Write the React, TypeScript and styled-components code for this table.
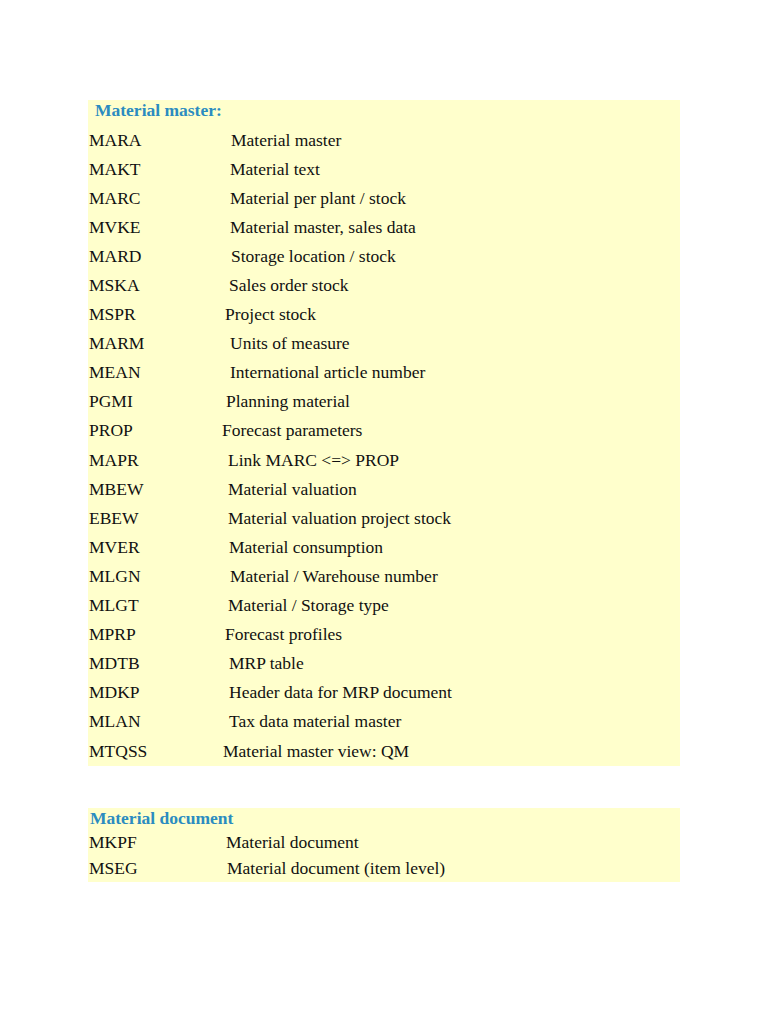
import React from "react";
import styled, { createGlobalStyle } from "styled-components";

const GlobalStyle = createGlobalStyle`
  html, body {
    margin: 0;
    padding: 0;
    background: #ffffff;
  }
  body {
    font-family: "Liberation Serif", "Times New Roman", serif;
    color: #111111;
  }
`;

const Page = styled.div({
  width: "768px",
  minHeight: "1024px",
  paddingTop: "100px",
  paddingLeft: "88px",
  boxSizing: "border-box",
  display: "flex",
  flexDirection: "column",
  gap: "42px",
});

const Section = styled.section({
  width: "592px",
  backgroundColor: "#ffffcc",
  display: "flex",
  flexDirection: "column",
});

const Heading = styled.div<{ $indent: number; $height: number }>((p) => ({
  height: `${p.$height}px`,
  lineHeight: "20px",
  paddingLeft: `${p.$indent}px`,
  fontSize: "17.5px",
  fontWeight: "bold",
  color: "#2b8cc0",
  whiteSpace: "nowrap",
}));

const Row = styled.div<{ $height: number }>((p) => ({
  height: `${p.$height}px`,
  display: "flex",
  alignItems: "center",
  fontSize: "17.5px",
  whiteSpace: "nowrap",
}));

const Code = styled.span({
  width: "131px",
  paddingLeft: "1px",
  flexShrink: 0,
});

const Desc = styled.span<{ $x: number }>((p) => ({
  paddingLeft: `${p.$x - 220}px`,
}));

type Entry = [string, string, number];

const masterRows: Entry[] = [
  ["MARA", "Material master", 231],
  ["MAKT", "Material text", 230],
  ["MARC", "Material per plant / stock", 230],
  ["MVKE", "Material master, sales data", 230],
  ["MARD", "Storage location / stock", 231],
  ["MSKA", "Sales order stock", 229],
  ["MSPR", "Project stock", 225],
  ["MARM", "Units of measure", 230],
  ["MEAN", "International article number", 230],
  ["PGMI", "Planning material", 226],
  ["PROP", "Forecast parameters", 222],
  ["MAPR", "Link MARC <=> PROP", 228],
  ["MBEW", "Material valuation", 228],
  ["EBEW", "Material valuation project stock", 228],
  ["MVER", "Material consumption", 229],
  ["MLGN", "Material / Warehouse number", 230],
  ["MLGT", "Material / Storage type", 228],
  ["MPRP", "Forecast profiles", 225],
  ["MDTB", "MRP table", 229],
  ["MDKP", "Header data for MRP document", 229],
  ["MLAN", "Tax data material master", 229],
  ["MTQSS", "Material master view: QM", 223],
];

const documentRows: Entry[] = [
  ["MKPF", "Material document", 226],
  ["MSEG", "Material document (item level)", 227],
];

const App = () => {
  return (
    <Page>
      <GlobalStyle />
      <Section>
        <Heading $indent={7} $height={25.5}>
          Material master:
        </Heading>
        {masterRows.map(([code, text, x]) => (
          <Row key={code} $height={29.1}>
            <Code>{code}</Code>
            <Desc $x={x}>{text}</Desc>
          </Row>
        ))}
      </Section>
      <Section>
        <Heading $indent={2} $height={22}>
          Material document
        </Heading>
        {documentRows.map(([code, text, x]) => (
          <Row key={code} $height={26}>
            <Code>{code}</Code>
            <Desc $x={x}>{text}</Desc>
          </Row>
        ))}
      </Section>
    </Page>
  );
};

export default App;
